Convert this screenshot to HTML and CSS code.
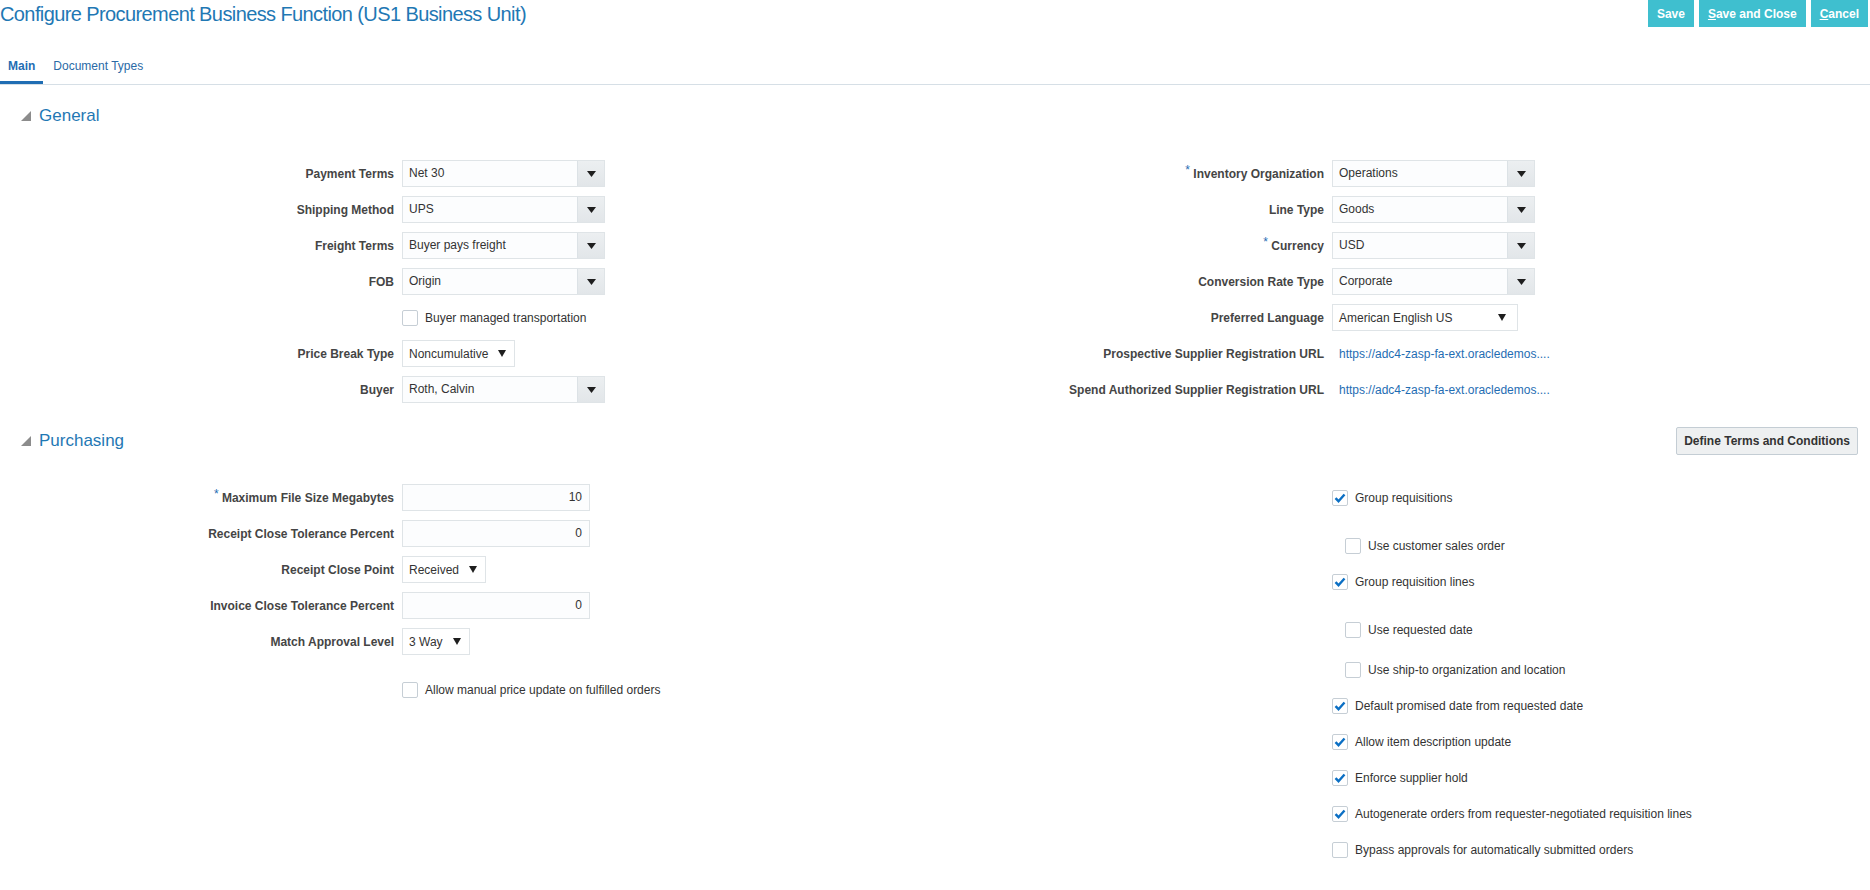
FILE: index.html
```html
<!DOCTYPE html>
<html lang="en">
<head>
    <meta charset="UTF-8">
    <meta name="viewport" content="width=device-width, initial-scale=1.0">
    <title>Configure Procurement Business Function</title>
    <link rel="stylesheet" href="styles.css">
</head>
<body>
    <div class="page-header">
        <h1 class="page-title">Configure Procurement Business Function (US1 Business Unit)</h1>
        <div class="header-actions">
            <button class="btn-primary">Save</button>
            <button class="btn-primary"><u>S</u>ave and Close</button>
            <button class="btn-primary"><u>C</u>ancel</button>
        </div>
    </div>

    <div class="tabs">
        <div class="tab active">Main</div>
        <div class="tab">Document Types</div>
    </div>

    <section class="section general">
        <div class="section-header">
            <h2 class="section-title"><span class="disclosure"></span>General</h2>
        </div>
        <div class="form-grid">
            <div class="form-col">
                <div class="row">
                    <span class="lbl">Payment Terms</span>
                    <div class="combo"><span class="combo-value">Net 30</span><span class="combo-btn"><svg width="9" height="6" viewBox="0 0 9 6"><polygon points="0,0 9,0 4.5,6" fill="#1e1e1e"/></svg></span></div>
                </div>
                <div class="row">
                    <span class="lbl">Shipping Method</span>
                    <div class="combo"><span class="combo-value">UPS</span><span class="combo-btn"><svg width="9" height="6" viewBox="0 0 9 6"><polygon points="0,0 9,0 4.5,6" fill="#1e1e1e"/></svg></span></div>
                </div>
                <div class="row">
                    <span class="lbl">Freight Terms</span>
                    <div class="combo"><span class="combo-value">Buyer pays freight</span><span class="combo-btn"><svg width="9" height="6" viewBox="0 0 9 6"><polygon points="0,0 9,0 4.5,6" fill="#1e1e1e"/></svg></span></div>
                </div>
                <div class="row">
                    <span class="lbl">FOB</span>
                    <div class="combo"><span class="combo-value">Origin</span><span class="combo-btn"><svg width="9" height="6" viewBox="0 0 9 6"><polygon points="0,0 9,0 4.5,6" fill="#1e1e1e"/></svg></span></div>
                </div>
                <div class="row">
                    <span class="lbl"></span>
                    <label class="check"><span class="box"></span>Buyer managed transportation</label>
                </div>
                <div class="row">
                    <span class="lbl">Price Break Type</span>
                    <div class="select"><span>Noncumulative</span><svg width="8" height="7" viewBox="0 0 8 7"><polygon points="0,0 8,0 4,7" fill="#1e1e1e"/></svg></div>
                </div>
                <div class="row">
                    <span class="lbl">Buyer</span>
                    <div class="combo"><span class="combo-value">Roth, Calvin</span><span class="combo-btn"><svg width="9" height="6" viewBox="0 0 9 6"><polygon points="0,0 9,0 4.5,6" fill="#1e1e1e"/></svg></span></div>
                </div>
            </div>

            <div class="form-col">
                <div class="row">
                    <span class="lbl"><span class="req">*</span> Inventory Organization</span>
                    <div class="combo"><span class="combo-value">Operations</span><span class="combo-btn"><svg width="9" height="6" viewBox="0 0 9 6"><polygon points="0,0 9,0 4.5,6" fill="#1e1e1e"/></svg></span></div>
                </div>
                <div class="row">
                    <span class="lbl">Line Type</span>
                    <div class="combo"><span class="combo-value">Goods</span><span class="combo-btn"><svg width="9" height="6" viewBox="0 0 9 6"><polygon points="0,0 9,0 4.5,6" fill="#1e1e1e"/></svg></span></div>
                </div>
                <div class="row">
                    <span class="lbl"><span class="req">*</span> Currency</span>
                    <div class="combo"><span class="combo-value">USD</span><span class="combo-btn"><svg width="9" height="6" viewBox="0 0 9 6"><polygon points="0,0 9,0 4.5,6" fill="#1e1e1e"/></svg></span></div>
                </div>
                <div class="row">
                    <span class="lbl">Conversion Rate Type</span>
                    <div class="combo"><span class="combo-value">Corporate</span><span class="combo-btn"><svg width="9" height="6" viewBox="0 0 9 6"><polygon points="0,0 9,0 4.5,6" fill="#1e1e1e"/></svg></span></div>
                </div>
                <div class="row">
                    <span class="lbl">Preferred Language</span>
                    <div class="select wide"><span>American English US</span><svg width="8" height="7" viewBox="0 0 8 7"><polygon points="0,0 8,0 4,7" fill="#1e1e1e"/></svg></div>
                </div>
                <div class="row">
                    <span class="lbl">Prospective Supplier Registration URL</span>
                    <span class="link-value">https://adc4-zasp-fa-ext.oracledemos....</span>
                </div>
                <div class="row">
                    <span class="lbl">Spend Authorized Supplier Registration URL</span>
                    <span class="link-value">https://adc4-zasp-fa-ext.oracledemos....</span>
                </div>
            </div>
        </div>
    </section>

    <section class="section purchasing">
        <div class="section-header">
            <h2 class="section-title"><span class="disclosure"></span>Purchasing</h2>
            <button class="btn-secondary">Define Terms and Conditions</button>
        </div>
        <div class="form-grid">
            <div class="form-col">
                <div class="row">
                    <span class="lbl"><span class="req">*</span> Maximum File Size Megabytes</span>
                    <div class="num">10</div>
                </div>
                <div class="row">
                    <span class="lbl">Receipt Close Tolerance Percent</span>
                    <div class="num">0</div>
                </div>
                <div class="row">
                    <span class="lbl">Receipt Close Point</span>
                    <div class="select"><span>Received</span><svg width="8" height="7" viewBox="0 0 8 7"><polygon points="0,0 8,0 4,7" fill="#1e1e1e"/></svg></div>
                </div>
                <div class="row">
                    <span class="lbl">Invoice Close Tolerance Percent</span>
                    <div class="num">0</div>
                </div>
                <div class="row">
                    <span class="lbl">Match Approval Level</span>
                    <div class="select"><span>3 Way</span><svg width="8" height="7" viewBox="0 0 8 7"><polygon points="0,0 8,0 4,7" fill="#1e1e1e"/></svg></div>
                </div>
                <div class="row spaced">
                    <span class="lbl"></span>
                    <label class="check"><span class="box"></span>Allow manual price update on fulfilled orders</label>
                </div>
            </div>

            <div class="check-list">
                <label class="check"><span class="box"><svg width="12" height="10" viewBox="0 0 12 10"><path d="M1.5 5.2 L4.5 8.2 L10.5 1.5" fill="none" stroke="#0b6fc4" stroke-width="2.4"/></svg></span>Group requisitions</label>
                <label class="check sub"><span class="box"></span>Use customer sales order</label>
                <label class="check"><span class="box"><svg width="12" height="10" viewBox="0 0 12 10"><path d="M1.5 5.2 L4.5 8.2 L10.5 1.5" fill="none" stroke="#0b6fc4" stroke-width="2.4"/></svg></span>Group requisition lines</label>
                <label class="check sub"><span class="box"></span>Use requested date</label>
                <label class="check sub"><span class="box"></span>Use ship-to organization and location</label>
                <label class="check"><span class="box"><svg width="12" height="10" viewBox="0 0 12 10"><path d="M1.5 5.2 L4.5 8.2 L10.5 1.5" fill="none" stroke="#0b6fc4" stroke-width="2.4"/></svg></span>Default promised date from requested date</label>
                <label class="check"><span class="box"><svg width="12" height="10" viewBox="0 0 12 10"><path d="M1.5 5.2 L4.5 8.2 L10.5 1.5" fill="none" stroke="#0b6fc4" stroke-width="2.4"/></svg></span>Allow item description update</label>
                <label class="check"><span class="box"><svg width="12" height="10" viewBox="0 0 12 10"><path d="M1.5 5.2 L4.5 8.2 L10.5 1.5" fill="none" stroke="#0b6fc4" stroke-width="2.4"/></svg></span>Enforce supplier hold</label>
                <label class="check"><span class="box"><svg width="12" height="10" viewBox="0 0 12 10"><path d="M1.5 5.2 L4.5 8.2 L10.5 1.5" fill="none" stroke="#0b6fc4" stroke-width="2.4"/></svg></span>Autogenerate orders from requester-negotiated requisition lines</label>
                <label class="check"><span class="box"></span>Bypass approvals for automatically submitted orders</label>
            </div>
        </div>
    </section>
</body>
</html>
```

FILE: styles.css
```css
body {
    margin: 0;
    font-family: "Liberation Sans", Arial, sans-serif;
    font-size: 12px;
    color: #333333;
    background: #ffffff;
}

.page-header {
    display: flex;
    justify-content: space-between;
    align-items: flex-start;
    height: 46px;
}

.page-title {
    margin: 0;
    font-size: 20px;
    font-weight: normal;
    line-height: 28px;
    letter-spacing: -0.6px;
    color: #1f78b4;
}

.header-actions {
    display: flex;
    gap: 5px;
    margin-right: 2px;
}

.btn-primary {
    height: 27px;
    padding: 0 9px;
    border: none;
    background-color: #3fbfcf;
    color: #ffffff;
    font-family: inherit;
    font-size: 12px;
    font-weight: bold;
    cursor: pointer;
}

.tabs {
    display: flex;
    gap: 2px;
    border-bottom: 1px solid #d6dfe6;
}

.tab {
    padding: 13px 8px 8px;
    line-height: 14px;
    border-bottom: 3px solid transparent;
    color: #2a6aa6;
}

.tab.active {
    font-weight: bold;
    color: #1f6db3;
    border-bottom-color: #1f6db3;
}

.section-header {
    display: flex;
    justify-content: space-between;
    align-items: center;
    height: 28px;
    padding: 0 12px 0 21px;
}

.general .section-header {
    margin-top: 17px;
}

.purchasing .section-header {
    margin-top: 24px;
}

.section-title {
    display: flex;
    align-items: center;
    gap: 8px;
    margin: 0;
    font-size: 17px;
    font-weight: normal;
    color: #1f78b4;
}

.disclosure {
    width: 0;
    height: 0;
    border-left: 10px solid transparent;
    border-bottom: 10px solid #8c8c8c;
}

.btn-secondary {
    height: 28px;
    padding: 0 7px;
    border: 1px solid #c4cdd4;
    border-radius: 2px;
    background-color: #eef0f1;
    color: #333333;
    font-family: inherit;
    font-size: 12px;
    font-weight: bold;
    cursor: pointer;
}

.form-grid {
    display: grid;
    grid-template-columns: 930px 1fr;
    margin-top: 30px;
}

.purchasing .form-grid {
    margin-top: 29px;
}

.form-col {
    display: flex;
    flex-direction: column;
    gap: 9px;
}

.row {
    display: flex;
    align-items: center;
    height: 27px;
}

.row.spaced {
    margin-top: 12px;
}

.lbl {
    flex: 0 0 394px;
    margin-right: 8px;
    text-align: right;
    font-weight: bold;
    color: #454545;
    white-space: nowrap;
}

.req {
    position: relative;
    top: -4px;
    color: #1f6db3;
    font-weight: normal;
}

.combo {
    display: flex;
    width: 203px;
    height: 27px;
    box-sizing: border-box;
    border: 1px solid #dfe4e7;
    background-color: #fcfdfe;
}

.combo-value {
    flex: 1;
    padding-left: 6px;
    line-height: 25px;
}

.combo-btn {
    display: flex;
    align-items: center;
    justify-content: center;
    width: 26px;
    border-left: 1px solid #dce2e6;
    background: linear-gradient(#eceff1, #e2e6e9);
}

.select {
    display: inline-flex;
    align-items: center;
    gap: 10px;
    height: 27px;
    box-sizing: border-box;
    padding: 0 8px 0 6px;
    border: 1px solid #dfe4e7;
    background-color: #ffffff;
}

.select.wide {
    width: 186px;
    justify-content: space-between;
    padding-right: 11px;
}

.num {
    width: 188px;
    height: 27px;
    box-sizing: border-box;
    padding-right: 7px;
    border: 1px solid #dfe4e7;
    background-color: #fcfdfe;
    line-height: 25px;
    text-align: right;
}

.link-value {
    padding-left: 7px;
    color: #1f6db3;
}

.check {
    display: flex;
    align-items: center;
    gap: 7px;
    height: 27px;
}

.box {
    display: flex;
    align-items: center;
    justify-content: center;
    width: 16px;
    height: 16px;
    box-sizing: border-box;
    border: 1px solid #c6ced5;
    border-radius: 2px;
    background-color: #ffffff;
}

.check-list {
    display: flex;
    flex-direction: column;
    gap: 9px;
    padding-left: 402px;
}

.check-list .sub {
    padding-left: 13px;
    margin-top: 12px;
}

.check-list .sub + .sub {
    margin-top: 4px;
}
```
